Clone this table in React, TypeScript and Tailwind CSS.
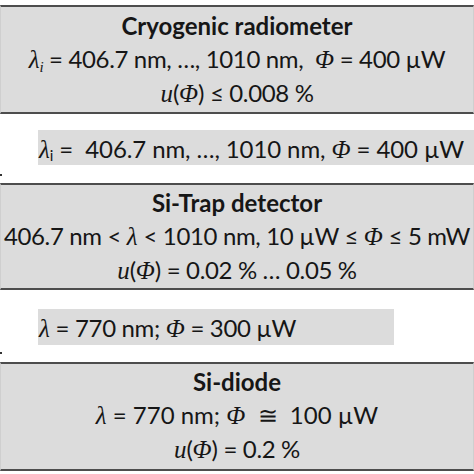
import type { ReactNode } from "react";

function Sym({ children }: { children: ReactNode }) {
  return (
    <span className="font-['Liberation_Serif',serif] italic text-[25px] tracking-normal">
      {children}
    </span>
  );
}

function Box({ className, children }: { className: string; children: ReactNode }) {
  return (
    <div
      className={`flex flex-col items-center border-y-2 border-[#4d4d4d] border-x border-x-[#cfcfcf] bg-[#dcdcdc] ${className}`}
    >
      {children}
    </div>
  );
}

function Line({
  children,
  bold,
  tight = "tracking-[-0.35px]",
}: {
  children: ReactNode;
  bold?: boolean;
  tight?: string;
}) {
  return (
    <div className={`leading-[33px] whitespace-pre ${bold ? "font-bold" : tight}`}>
      {children}
    </div>
  );
}

function Dot({ top, height }: { top: string; height: string }) {
  return (
    <div className={height}>
      <div className={`${top} h-[2px] w-[2px] bg-[#333]`} />
    </div>
  );
}

export default function App() {
  return (
    <div className="flex h-[474px] w-[474px] flex-col overflow-hidden bg-white font-['Lato',sans-serif] text-[24px] text-[#161616]">
      <Box className="mt-[5px] h-[109px] pt-[2px]">
        <Line bold>Cryogenic radiometer</Line>
        <Line>
          <Sym>λ</Sym>
          <sub className="font-['Liberation_Serif',serif] italic text-[15px]">i</sub>
          {" = 406.7 nm, …, 1010 nm,  "}
          <Sym>Φ</Sym>
          {" = 400 µW"}
        </Line>
        <Line>
          <Sym>u</Sym>(<Sym>Φ</Sym>){" ≤ 0.008 %"}
        </Line>
      </Box>

      <div className="mt-[16px] ml-[38px] flex h-[35px] items-center bg-[#dcdcdc] pl-[1px] pt-[2px]">
        <Line tight="tracking-[-0.1px]">
          <Sym>λ</Sym>
          <sub className="text-[15px]">i</sub>
          {" =  406.7 nm, …, 1010 nm, "}
          <Sym>Φ</Sym>
          {" = 400 µW"}
        </Line>
      </div>
      <Dot top="mt-[9px]" height="h-[18px]" />

      <Box className="h-[107px] pt-[1px]">
        <Line bold>Si-Trap detector</Line>
        <Line>
          {"406.7 nm < "}
          <Sym>λ</Sym>
          {" < 1010 nm, 10 µW ≤ "}
          <Sym>Φ</Sym>
          {" ≤ 5 mW"}
        </Line>
        <Line>
          <Sym>u</Sym>(<Sym>Φ</Sym>){" = 0.02 % … 0.05 %"}
        </Line>
      </Box>

      <div className="mt-[19px] ml-[38px] flex h-[36px] w-[356px] items-center bg-[#dcdcdc] pl-[1px] pt-[2px]">
        <Line>
          <Sym>λ</Sym>
          {" = 770 nm; "}
          <Sym>Φ</Sym>
          {" = 300 µW"}
        </Line>
      </div>
      <Dot top="mt-[7px]" height="h-[17px]" />

      <Box className="h-[109px] pt-[1px]">
        <Line bold>Si-diode</Line>
        <Line tight="tracking-normal">
          <Sym>λ</Sym>
          {" = 770 nm; "}
          <Sym>Φ</Sym>
          {"  ≅  100 µW"}
        </Line>
        <Line>
          <Sym>u</Sym>(<Sym>Φ</Sym>){" = 0.2 %"}
        </Line>
      </Box>
    </div>
  );
}
